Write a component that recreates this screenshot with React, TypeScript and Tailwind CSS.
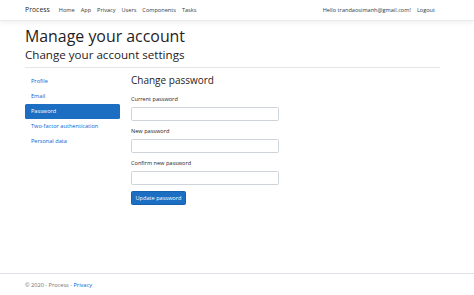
import React from "react";

const font = { fontFamily: '"Open Sans", "Noto Sans", Arial, sans-serif' };

export default function App() {
  const navLinks = ["Home", "App", "Privacy", "Users", "Components", "Tasks"];
  const side = ["Profile", "Email", "Password", "Two-factor authentication", "Personal data"];
  const fields = ["Current password", "New password", "Confirm new password"];
  return (
    <div className="flex h-[295px] w-[474px] flex-col overflow-hidden bg-white text-[#212529]" style={font}>
      <header className="h-[21px] shrink-0 border-b border-[#e9ecef] bg-white shadow-[0_1.5px_4.5px_rgba(0,0,0,0.06)]">
        <div className="ml-[25px] flex h-full w-[413px] items-center">
          <span className="mr-[6px] text-[6.9px] leading-[10px] text-[rgba(0,0,0,0.9)]">Process</span>
          {navLinks.map((l) => (
            <span key={l} className="px-[3px] text-[5.6px] leading-[9px] text-[#343a40]">{l}</span>
          ))}
          <div className="ml-auto flex items-center">
            <span className="px-[3px] text-[5.6px] leading-[9px] text-[#343a40]">Hello trandaosimanh@gmail.com!</span>
            <span className="px-[3px] text-[5.6px] leading-[9px] text-[#343a40]">Logout</span>
          </div>
        </div>
      </header>
      <main className="ml-[25px] mt-[6px] w-[415px]">
        <h1 className="text-[15.9px] leading-[18px] text-[#1f2225]">Manage your account</h1>
        <h2 className="mt-[3px] text-[11.6px] leading-[14px] text-[#1f2225]">Change your account settings</h2>
        <hr className="mt-[5px] border-t border-[#e6e6e6]" />
        <div className="mt-[6px] flex gap-[11px]">
          <nav className="flex w-[95px] flex-col">
            {side.map((s) => (
              <span
                key={s}
                className={
                  s === "Password"
                    ? "h-[15px] rounded-[1.5px] bg-[#1b6ec2] px-[6px] text-[5.6px] leading-[15px] text-white"
                    : "h-[15px] px-[6px] text-[5.6px] leading-[15px] text-[#0366d6]"
                }
              >
                {s}
              </span>
            ))}
          </nav>
          <div className="flex flex-col">
            <h4 className="text-[10px] leading-[12px] text-[#1f2225]">Change password</h4>
            <div className="mt-[9px] flex w-[148px] flex-col">
              {fields.map((f) => (
                <div key={f} className="mb-[6px] flex flex-col">
                  <label className="mb-[3px] text-[5.6px] leading-[9px] text-[#212529]">{f}</label>
                  <div className="h-[14px] rounded-[1.5px] border border-[#ced4da] bg-white" />
                </div>
              ))}
              <button className="h-[14px] w-[55px] rounded-[1.5px] border border-[#1861ac] bg-[#1b6ec2] text-[5.6px] leading-[12px] text-white">
                Update password
              </button>
            </div>
          </div>
        </div>
      </main>
      <footer className="mt-auto h-[22px] shrink-0 border-t border-[#dee2e6]">
        <div className="ml-[25px] text-[5.6px] leading-[22px] text-[#6c757d]">
          © 2020 - Process - <span className="text-[#0366d6]">Privacy</span>
        </div>
      </footer>
    </div>
  );
}
